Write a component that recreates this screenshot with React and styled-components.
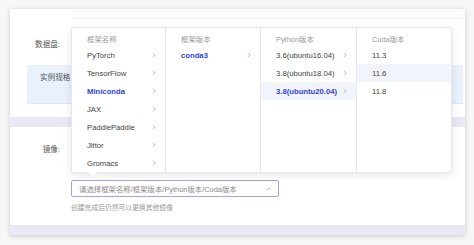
import React from "react";
import styled, { createGlobalStyle } from "styled-components";

const GlobalStyle = createGlobalStyle`
  html, body {
    margin: 0;
    padding: 0;
    background: #f7f7f8;
  }
  body {
    font-family: "Liberation Sans", "Noto Sans CJK SC", sans-serif;
    -webkit-font-smoothing: antialiased;
  }
`;

const Page = styled.div`
  width: 474px;
  height: 245px;
  padding: 9px 9px 0 10px;
  box-sizing: border-box;
  overflow: hidden;
`;

const Card = styled.div`
  position: relative;
  width: 455px;
  height: 226px;
  background: #fff;
  box-shadow: 0 1px 5px rgba(0, 0, 0, 0.18);
  display: flex;
  flex-direction: column;
`;

const TopStrip = styled.div`
  height: 10px;
  margin-left: 62px;
  background: #fcfcfd;
  border-bottom: 1px solid #f1f1f4;
  box-sizing: border-box;
`;

const FormRow = styled.div`
  display: flex;
  align-items: center;
  height: 18px;
  margin-top: ${(p) => p.$top}px;
`;

const Label = styled.span`
  width: 50px;
  text-align: right;
  font-size: 7.6px;
  color: #555;
`;

const InfoBox = styled.div`
  margin: 13px 2px 0 17px;
  height: 39px;
  box-sizing: border-box;
  padding: 8px 0 0 13px;
  background: #e9f1fd;
  border-bottom: 1px solid #dce7fa;
  font-size: 7.6px;
  line-height: 10px;
  color: #555;
`;

const Band = styled.div`
  height: 10px;
  margin-top: ${(p) => p.$top}px;
  background: #e8e9f4;
`;

const Field = styled.div`
  margin: ${(p) => p.$top}px 0 0 61px;
`;

const SelectBox = styled.div`
  width: 208px;
  height: 17px;
  box-sizing: border-box;
  border: 1px solid #a3a3e6;
  border-radius: 2px;
  display: flex;
  align-items: center;
  justify-content: space-between;
  padding: 0 6px 0 7px;
  font-size: 7.4px;
  color: #8a8a8a;
`;

const Helper = styled.div`
  margin: 6px 0 0 61px;
  font-size: 6.8px;
  line-height: 10px;
  color: #999;
`;

const Cascader = styled.div`
  position: absolute;
  left: 61px;
  top: 18px;
  display: flex;
  height: 146px;
  background: #fff;
  border: 1px solid #e6e8ee;
  border-radius: 2px;
  box-sizing: border-box;
  box-shadow: 0 2px 8px rgba(0, 0, 0, 0.1);

  &::before,
  &::after {
    content: "";
    position: absolute;
    left: 16px;
    width: 0;
    height: 0;
    border-style: solid;
    border-color: transparent;
  }
  &::before {
    bottom: -6px;
    border-width: 6px 5px 0 5px;
    border-top-color: #e6e8ee;
  }
  &::after {
    bottom: -5px;
    border-width: 5px 5px 0 5px;
    border-top-color: #fff;
  }
`;

const Column = styled.div`
  width: ${(p) => p.$w}px;
  padding-top: 3px;
  box-sizing: border-box;
  border-left: ${(p) => (p.$first ? "none" : "1px solid #e8e8ec")};
`;

const ColHead = styled.div`
  height: 15px;
  padding: 3px 0 0 15px;
  box-sizing: border-box;
  font-size: 7.4px;
  line-height: 12px;
  color: #999;
`;

const Option = styled.div`
  height: 18px;
  display: flex;
  align-items: center;
  justify-content: space-between;
  padding: 0 8px 0 15px;
  font-size: 7.7px;
  color: ${(p) => (p.$active ? "#3146d4" : "#444")};
  font-weight: ${(p) => (p.$active ? 700 : 400)};
  background: ${(p) => (p.$hl ? "#f1f4fa" : "transparent")};
`;

const Chevron = ({ dir = "right" }) => (
  <svg
    width="6"
    height="6"
    viewBox="0 0 6 6"
    style={{ flex: "none" }}
  >
    {dir === "right" ? (
      <polyline points="2,0.8 4.2,3 2,5.2" fill="none" stroke="#aaa" strokeWidth="0.8" />
    ) : (
      <polyline points="0.8,4 3,1.8 5.2,4" fill="none" stroke="#aaa" strokeWidth="0.8" />
    )}
  </svg>
);

const columns = [
  {
    title: "框架名称",
    w: 93,
    items: [
      { t: "PyTorch", more: true },
      { t: "TensorFlow", more: true },
      { t: "Miniconda", more: true, active: true },
      { t: "JAX", more: true },
      { t: "PaddlePaddle", more: true },
      { t: "Jittor", more: true },
      { t: "Gromacs", more: true },
    ],
  },
  {
    title: "框架版本",
    w: 95,
    items: [{ t: "conda3", more: true, active: true }],
  },
  {
    title: "Python版本",
    w: 96,
    items: [
      { t: "3.6(ubuntu16.04)", more: true },
      { t: "3.8(ubuntu18.04)", more: true },
      { t: "3.8(ubuntu20.04)", more: true, active: true, hl: true },
    ],
  },
  {
    title: "Cuda版本",
    w: 95,
    items: [{ t: "11.3" }, { t: "11.6", hl: true }, { t: "11.8" }],
  },
];

export default function App() {
  return (
    <>
      <GlobalStyle />
      <Page>
        <Card>
          <TopStrip />
          <FormRow $top={15}>
            <Label>数据盘:</Label>
          </FormRow>
          <InfoBox>实例规格</InfoBox>
          <Band $top={13} />
          <FormRow $top={12}>
            <Label>镜像:</Label>
          </FormRow>
          <Field $top={23}>
            <SelectBox>
              <span>请选择框架名称/框架版本/Python版本/Cuda版本</span>
              <Chevron dir="up" />
            </SelectBox>
          </Field>
          <Helper>创建完成后仍然可以更换其他镜像</Helper>
          <Band $top={12} />

          <Cascader>
            {columns.map((col, i) => (
              <Column key={col.title} $w={col.w} $first={i === 0}>
                <ColHead>{col.title}</ColHead>
                {col.items.map((it) => (
                  <Option key={it.t} $active={it.active} $hl={it.hl}>
                    <span>{it.t}</span>
                    {it.more && <Chevron />}
                  </Option>
                ))}
              </Column>
            ))}
          </Cascader>
        </Card>
      </Page>
    </>
  );
}
